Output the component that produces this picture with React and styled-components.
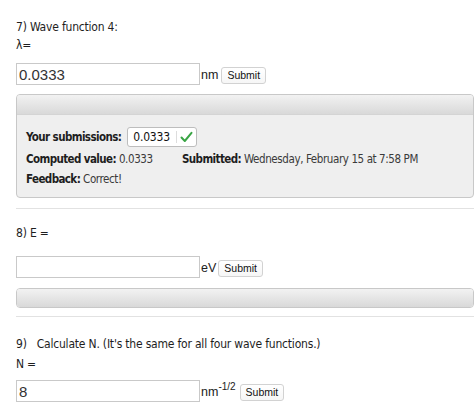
import React from "react";
import styled, { createGlobalStyle } from "styled-components";

const Global = createGlobalStyle`
  html, body { margin: 0; padding: 0; background: #fff; }
  body { font-family: "DejaVu Sans Condensed", "DejaVu Sans", sans-serif; color: #1e1e1e; }
`;

const Page = styled.div`
  padding: 18px 0 0 16px;
  width: 458px;
  overflow: hidden;
`;

const Line = styled.div`
  font-size: 12px;
  letter-spacing: -0.2px;
  line-height: 18px;
  margin-top: ${(p) => p.$mt || 0}px;
  white-space: nowrap;
`;

const Gap = styled.span`
  display: inline-block;
  width: ${(p) => p.$w}px;
`;

const Row = styled.div`
  display: flex;
  align-items: center;
  height: 22px;
  margin-top: ${(p) => p.$mt || 0}px;
`;

const Field = styled.input`
  box-sizing: border-box;
  width: 184px;
  height: 22px;
  margin: 0;
  padding: 0 2px;
  border: 1px solid #c9c9c9;
  font-family: "Liberation Sans", Arial, sans-serif;
  font-size: 15px;
  color: #333;
  background: #fff;
  outline: none;
`;

const Unit = styled.span`
  font-family: "Liberation Sans", Arial, sans-serif;
  font-size: 12.5px;
  color: #222;
  margin-left: 1px;
  padding-top: 2px;
  sup { font-size: 10px; vertical-align: 6px; line-height: 0; }
`;

const SubmitBtn = styled.button`
  box-sizing: border-box;
  height: 17px;
  margin: 2px 0 0 ${(p) => p.$ml || 3}px;
  padding: 0 5px;
  border: 1px solid #d2d2d2;
  border-radius: 3px;
  background: linear-gradient(#fff, #f6f6f6);
  font-family: "Liberation Sans", Arial, sans-serif;
  font-size: 10.5px;
  color: #111;
  line-height: 15px;
`;

const Panel = styled.div`
  box-sizing: border-box;
  margin-top: ${(p) => p.$mt || 10}px;
  width: 458px;
  border: 1px solid #c8c8c8;
  border-radius: 4px;
  background: #efefef;
  overflow: hidden;
`;

const PanelHead = styled.div`
  height: ${(p) => p.$h || 19}px;
  background: linear-gradient(#f2f2f2, #d9d9d9);
  border-bottom: ${(p) => (p.$open ? "1px solid #d4d4d4" : "none")};
`;

const PanelBody = styled.div`
  padding: 12px 0 8px 9px;
  font-size: 11.5px;
  letter-spacing: -0.4px;
  b { letter-spacing: -0.6px; }
`;

const Label = styled.b`
  font-weight: bold;
`;

const AnswerRow = styled.div`
  display: flex;
  align-items: center;
  height: 20px;
  margin-bottom: 2px;
`;

const AnswerBox = styled.span`
  display: inline-flex;
  align-items: center;
  box-sizing: border-box;
  height: 20px;
  margin-left: 6px;
  padding: 0 3px 0 5px;
  border: 1px solid #bdbdbd;
  border-radius: 3px;
  background: #fff;
  font-size: 12px;
  letter-spacing: -0.2px;
  color: #111;
`;

const Sep = styled.span`
  width: 1px;
  height: 12px;
  margin: 0 3px 0 6px;
  background: #ddd;
`;

const InfoRow = styled.div`
  display: flex;
  line-height: 20px;
  color: #3a3a3a;
  b { color: #1e1e1e; }
`;

const Col = styled.span`
  width: ${(p) => p.$w || "auto"};
  white-space: nowrap;
`;

const Divider = styled.div`
  height: 1px;
  background: #e2e2e2;
  margin-top: ${(p) => p.$mt}px;
  width: 470px;
`;

const Check = () => (
  <svg width="13" height="12" viewBox="0 0 13 12">
    <path d="M1.5 6.5 L4.8 10 L11.5 1.8" fill="none" stroke="#3aa545" strokeWidth="2" strokeLinecap="round" strokeLinejoin="round" />
  </svg>
);

export default function App() {
  return (
    <Page>
      <Global />
      <Line>7) Wave function 4:</Line>
      <Line>λ=</Line>
      <Row $mt={9}>
        <Field defaultValue="0.0333" />
        <Unit>nm</Unit>
        <SubmitBtn>Submit</SubmitBtn>
      </Row>
      <Panel $mt={9}>
        <PanelHead $open />
        <PanelBody>
          <AnswerRow>
            <Label>Your submissions:</Label>
            <AnswerBox>
              0.0333
              <Sep />
              <Check />
            </AnswerBox>
          </AnswerRow>
          <InfoRow>
            <Col $w="156px"><b>Computed value:</b> 0.0333</Col>
            <Col><b>Submitted:</b> Wednesday, February 15 at 7:58 PM</Col>
          </InfoRow>
          <InfoRow>
            <Col><b>Feedback:</b> Correct!</Col>
          </InfoRow>
        </PanelBody>
      </Panel>
      <Divider $mt={10} />
      <Line $mt={15}>8) E =</Line>
      <Row $mt={14}>
        <Field />
        <Unit>eV</Unit>
        <SubmitBtn $ml={2}>Submit</SubmitBtn>
      </Row>
      <Panel $mt={10}>
        <PanelHead $h={18} />
      </Panel>
      <Divider $mt={8} />
      <Line $mt={18}>9)<Gap $w={10} />Calculate N. (It's the same for all four wave functions.)</Line>
      <Line $mt={2}>N =</Line>
      <Row $mt={7}>
        <Field defaultValue="8" />
        <Unit>nm<sup>-1/2</sup></Unit>
        <SubmitBtn $ml={4}>Submit</SubmitBtn>
      </Row>
    </Page>
  );
}
